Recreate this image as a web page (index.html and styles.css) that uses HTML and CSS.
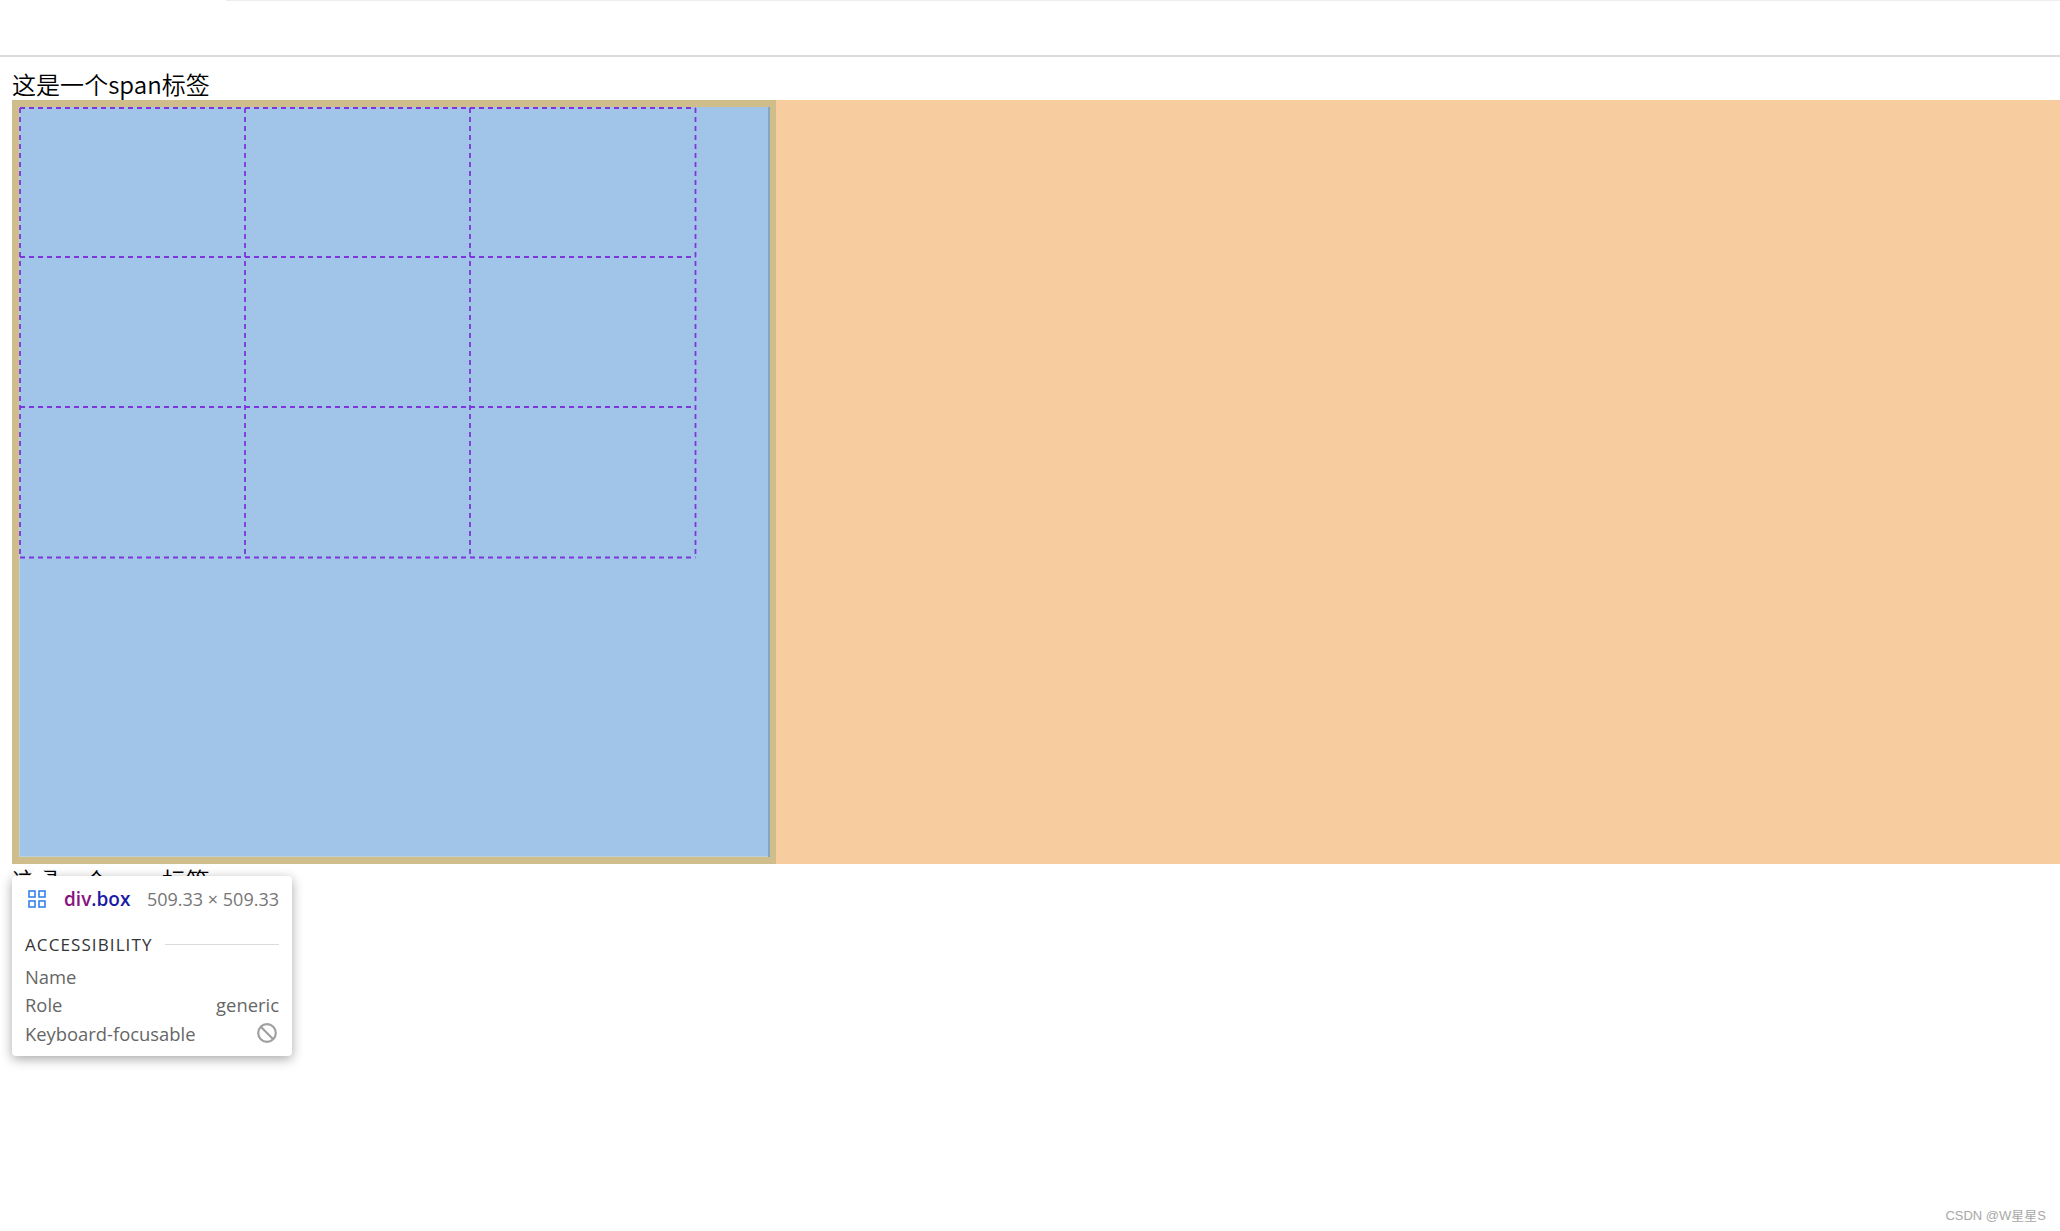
FILE: index.html
```html
<!DOCTYPE html>
<html lang="zh">
<head>
<meta charset="utf-8">
<title>div.box</title>
<link rel="stylesheet" href="styles.css">
</head>
<body>
<header class="topbar"><div class="topbar-edge"></div></header>
<main class="content">
  <span class="label">这是一个span标签</span>
  <div class="margin-band">
    <div class="box">
      <svg class="grid-overlay" width="700" height="480" viewBox="0 0 700 480" aria-hidden="true">
        <g class="grid-lines">
          <line x1="1" y1="1" x2="676.5" y2="1"/>
          <line x1="1" y1="150" x2="676.5" y2="150"/>
          <line x1="1" y1="300" x2="676.5" y2="300"/>
          <line x1="1" y1="450.5" x2="676.5" y2="450.5"/>
          <line x1="1" y1="1" x2="1" y2="450.5"/>
          <line x1="226" y1="1" x2="226" y2="450.5"/>
          <line x1="451" y1="1" x2="451" y2="450.5"/>
          <line x1="676.5" y1="1" x2="676.5" y2="450.5"/>
        </g>
      </svg>
    </div>
  </div>
  <span class="label label-below">这是一个span标签</span>
</main>

<aside class="tooltip">
  <div class="tip-head">
    <svg class="tip-icon" width="18" height="18" viewBox="0 0 18 18" aria-hidden="true">
      <g class="tip-icon-cells">
        <rect x="1" y="1" width="6" height="6"/>
        <rect x="11" y="1" width="6" height="6"/>
        <rect x="1" y="11" width="6" height="6"/>
        <rect x="11" y="11" width="6" height="6"/>
      </g>
    </svg>
    <span class="tip-name"><span class="tag">div</span><span class="cls">.box</span></span>
    <span class="tip-size">509.33 × 509.33</span>
  </div>
  <div class="tip-section">
    <span class="tip-title">ACCESSIBILITY</span>
    <span class="tip-rule"></span>
  </div>
  <div class="tip-row"><span>Name</span></div>
  <div class="tip-row"><span>Role</span><span>generic</span></div>
  <div class="tip-row"><span>Keyboard-focusable</span>
    <svg class="ban" width="20" height="20" viewBox="0 0 20 20" aria-hidden="true">
      <circle cx="10" cy="10" r="8.8"/>
      <line x1="3.8" y1="3.8" x2="16.2" y2="16.2"/>
    </svg>
  </div>
</aside>

<footer class="watermark">CSDN @W星星S</footer>
</body>
</html>
```
FILE: styles.css
```css
* { box-sizing: border-box; }

html, body {
  margin: 0;
  height: 100%;
  background: #fff;
  overflow: hidden;
}

body {
  position: relative;
  font-family: "Noto Sans", "Noto Sans CJK SC", sans-serif;
  color: #000;
}

.topbar {
  height: 57px;
  border-bottom: 2px solid #dcdcdc;
}

.topbar-edge {
  height: 1px;
  margin-left: 226px;
  background: #eeeeee;
}

.content {
  display: flex;
  flex-direction: column;
  align-items: flex-start;
}

.label {
  height: 43px;
  padding-left: 12px;
  font-family: "Noto Sans CJK SC", sans-serif;
  font-size: 24px;
  font-weight: 350;
  letter-spacing: .05px;
  line-height: 53px;
  white-space: nowrap;
}

.label-below {
  line-height: 32px;
}

.margin-band {
  align-self: stretch;
  margin-left: 12px;
  height: 764px;
  background: #f7cc9e;
}

.box {
  width: 764px;
  height: 764px;
  border: 7px solid #d0bd8c;
  border-right-width: 6px;
  background: #a1c5e9;
  box-shadow: inset -2px 0 0 #86a6bd, inset 0 -1px 0 #bcd2dc, inset 1px 0 0 #bcd2dc;
}

.grid-overlay {
  display: block;
}

.grid-lines line {
  stroke: #7f35dc;
  stroke-width: 1.8;
  stroke-dasharray: 5 4;
}

.tooltip {
  position: absolute;
  left: 12px;
  top: 876px;
  width: 280px;
  height: 180px;
  padding: 12px 13px 0;
  background: #fff;
  border-radius: 4px;
  box-shadow: 0 3px 12px rgba(0, 0, 0, .35);
  font-family: "Open Sans", "Noto Sans", sans-serif;
  font-size: 18.4px;
  color: #666;
}

.tooltip::before {
  content: "";
  position: absolute;
  left: 20px;
  top: -7px;
  width: 14px;
  height: 14px;
  background: #fff;
  transform: rotate(45deg);
}

.tip-head {
  position: relative;
  display: flex;
  align-items: center;
  height: 22px;
}

.tip-icon {
  flex: none;
  margin-left: 3px;
  margin-right: 18px;
}

.tip-icon-cells rect {
  fill: none;
  stroke: #3583ea;
  stroke-width: 1.6;
}

.tip-name {
  font-size: 19px;
  font-weight: 600;
}

.tag { color: #881280; }
.cls { color: #1a1aa6; }

.tip-size {
  margin-left: auto;
  font-size: 18px;
  color: #777;
}

.tip-section {
  display: flex;
  align-items: center;
  gap: 12px;
  margin-top: 22px;
  height: 24px;
}

.tip-title {
  font-size: 17px;
  letter-spacing: 1.1px;
  color: #333;
}

.tip-rule {
  flex: 1;
  height: 1px;
  background: #dcdcdc;
}

.tip-row {
  display: flex;
  align-items: center;
  justify-content: space-between;
  height: 28.6px;
}

.tip-section + .tip-row {
  margin-top: 6px;
}

.ban {
  margin-right: 2px;
}

.ban circle,
.ban line {
  fill: none;
  stroke: #a0a0a0;
  stroke-width: 2.2;
}

.watermark {
  position: absolute;
  right: 14px;
  bottom: 7px;
  font-family: "Liberation Sans", "Noto Sans CJK SC", sans-serif;
  font-size: 13px;
  line-height: 16px;
  color: #a8a8a8;
}
```
